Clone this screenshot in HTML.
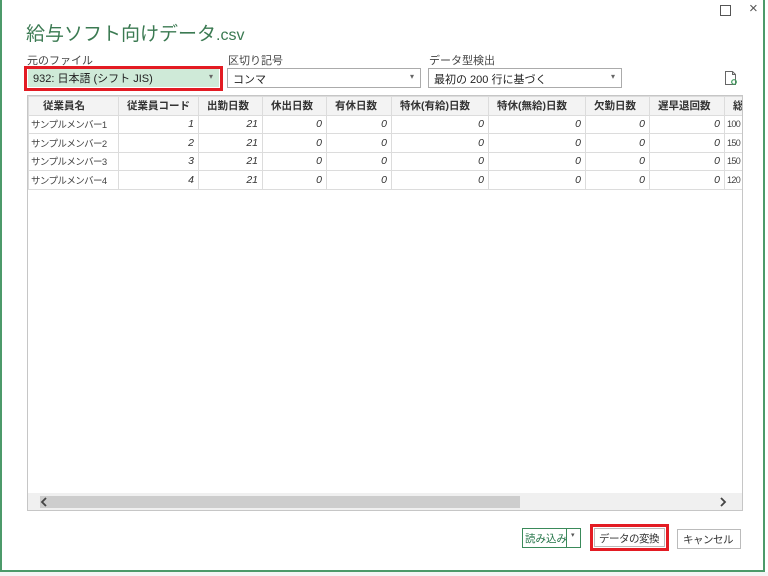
<!DOCTYPE html>
<html><head><meta charset="utf-8"><style>
*{box-sizing:border-box;margin:0;padding:0}
body{width:768px;height:576px;background:#fff;position:relative;overflow:hidden;font-family:"Liberation Sans","Noto Sans CJK JP",sans-serif;font-size:11px;color:#333}
.a{position:absolute;white-space:nowrap}
.lbl{font-size:11px;color:#444}
.dd{position:absolute;height:20px;border:1px solid #ababab;background:#fff;font-size:11px;padding:2px 5px;color:#222}
.dd:after{content:"▾";position:absolute;right:6px;top:3px;font-size:8px;color:#666}
table{border-collapse:collapse;font-size:10.5px}
td,th{border:1px solid #dcdcdc;height:18.5px;padding:0 4px;white-space:nowrap;overflow:hidden}
th{background:#f3f3f3;font-weight:bold;text-align:left;color:#333;padding-left:8px}
td{text-align:right;font-style:italic;color:#333}
td.n{text-align:left;font-style:normal;color:#444;padding-left:2px;font-size:9.5px;letter-spacing:-0.6px}
</style></head><body>
<div class="a" style="left:0;top:0;width:2px;height:572px;background:#4c9a6a"></div>
<div class="a" style="left:763px;top:0;width:2px;height:572px;background:#4c9a6a"></div>
<div class="a" style="left:0;top:570px;width:765px;height:2px;background:#4c9a6a"></div>
<div class="a" style="left:0;top:572px;width:768px;height:4px;background:#f4f4f4"></div>
<div class="a" style="left:720px;top:5px;width:11px;height:11px;border:1px solid #555"></div>
<div class="a" style="left:749px;top:0px;font-size:15px;color:#555">×</div>
<div class="a" style="left:26px;top:19px;font-size:19px;color:#3b7a52">給与ソフト向けデータ<span style="font-size:16px">.csv</span></div>
<div class="a lbl" style="left:27px;top:52px">元のファイル</div>
<div class="a lbl" style="left:228px;top:52px">区切り記号</div>
<div class="a lbl" style="left:429px;top:52px">データ型検出</div>
<div class="a" style="left:24px;top:66px;width:199px;height:25px;border:3px solid #e31b23"></div>
<div class="dd" style="left:28px;top:69px;width:191px;height:18px;background:#cfead8;border:none;padding-top:1px">932: 日本語 (シフト JIS)</div>
<div class="dd" style="left:227px;top:68px;width:194px">コンマ</div>
<div class="dd" style="left:428px;top:68px;width:194px">最初の 200 行に基づく</div>
<svg class="a" style="left:724px;top:70px" width="14" height="16" viewBox="0 0 14 16"><path d="M1.5 1.5h7l3 3v10h-10z" fill="#fff" stroke="#666"/><path d="M8.5 1.5v3h3" fill="none" stroke="#666"/><circle cx="10" cy="12" r="2.3" fill="none" stroke="#3a9a5a" stroke-width="1.2"/></svg>
<div class="a" style="left:27px;top:95px;width:716px;height:416px;border:1px solid #c6c6c6;overflow:hidden">
<table style="width:730px;table-layout:fixed">
<colgroup><col style="width:90px"><col style="width:80px"><col style="width:64px"><col style="width:64px"><col style="width:65px"><col style="width:97px"><col style="width:97px"><col style="width:64px"><col style="width:75px"><col style="width:34px"></colgroup>
<tr><th style="padding-left:14px">従業員名</th><th>従業員コード</th><th>出勤日数</th><th>休出日数</th><th>有休日数</th><th>特休(有給)日数</th><th>特休(無給)日数</th><th>欠勤日数</th><th>遅早退回数</th><th>総</th></tr>
<tr><td class="n">サンプルメンバー1</td><td>1</td><td>21</td><td>0</td><td>0</td><td>0</td><td>0</td><td>0</td><td>0</td><td class="n" style="font-size:9px">100</td></tr>
<tr><td class="n">サンプルメンバー2</td><td>2</td><td>21</td><td>0</td><td>0</td><td>0</td><td>0</td><td>0</td><td>0</td><td class="n" style="font-size:9px">150</td></tr>
<tr><td class="n">サンプルメンバー3</td><td>3</td><td>21</td><td>0</td><td>0</td><td>0</td><td>0</td><td>0</td><td>0</td><td class="n" style="font-size:9px">150</td></tr>
<tr><td class="n">サンプルメンバー4</td><td>4</td><td>21</td><td>0</td><td>0</td><td>0</td><td>0</td><td>0</td><td>0</td><td class="n" style="font-size:9px">120</td></tr>
</table>
<div class="a" style="left:0;top:397px;width:716px;height:17px;background:#f0f0f0"></div>
<div class="a" style="left:12px;top:400px;width:480px;height:12px;background:#cdcdcd"></div>
<svg class="a" style="left:12px;top:401px" width="8" height="10"><path d="M6 1L2 5l4 4" fill="none" stroke="#444" stroke-width="1.8"/></svg>
<svg class="a" style="left:691px;top:401px" width="8" height="10"><path d="M2 1l4 4-4 4" fill="none" stroke="#444" stroke-width="1.8"/></svg>
</div>
<div class="a" style="left:522px;top:528px;width:59px;height:20px;border:1px solid #3a8a5a;font-size:10.5px;color:#217346;padding:2px 2px;overflow:hidden">読み込み</div>
<div class="a" style="left:566px;top:529px;width:1px;height:18px;background:#3a8a5a"></div>
<div class="a" style="left:571px;top:531px;font-size:7px;color:#555">▾</div>
<div class="a" style="left:590px;top:524px;width:79px;height:27px;border:3px solid #e31b23"></div>
<div class="a" style="left:594px;top:528px;width:71px;height:19px;border:1px solid #bbb;font-size:10.5px;padding:2px 4px;color:#333;overflow:hidden;letter-spacing:-0.5px">データの変換</div>
<div class="a" style="left:677px;top:529px;width:64px;height:20px;border:1px solid #bbb;font-size:10.5px;padding:2px 5px;color:#333;overflow:hidden;letter-spacing:-0.5px">キャンセル</div>
</body></html>
